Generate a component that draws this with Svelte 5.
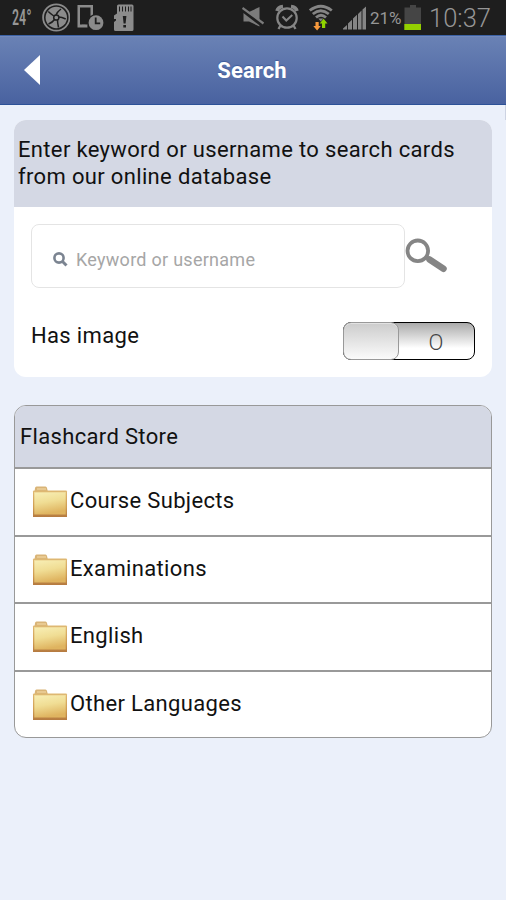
<script lang="ts">
	const folders = ['Course Subjects', 'Examinations', 'English', 'Other Languages'];

	let keyword = $state('');
	let hasImage = $state(false);
</script>

<div class="screen">
	<div class="status-bar">
		<span class="temp">24°</span>
		<svg class="wheel" width="28" height="35" viewBox="42 0 28 35">
			<circle cx="56.3" cy="17.5" r="13.2" fill="none" stroke="#8b8b8b" stroke-width="1.8" />
			<circle cx="56.3" cy="17.5" r="10.7" fill="#8b8b8b" />
			<g stroke="#1e1e1e" stroke-width="1.5" fill="none">
				<circle cx="56.3" cy="17.5" r="2.6" />
				<path d="M56 15q1-3 5-6M58.7 17q3 0 7 2M57.5 20q0 3 1 7.500M54.500 19.500q-2 3-6 4.500M53.800 16q-3-2-5.500-4.500" />
			</g>
		</svg>
		<svg class="device" width="27" height="35" viewBox="76.500 0 27 35">
			<path d="M92.500 14.500V5H77v22.500h10a8 8 0 0 1 0-3H79.500V7.500H90V16z" fill="#8b8b8b" />
			<path d="M81.500 25.500h3.500" stroke="#8b8b8b" stroke-width="1.500" />
			<circle cx="95.500" cy="22.700" r="7.400" fill="#8b8b8b" />
			<path d="M95.200 17.500v5.800h4.500" fill="none" stroke="#1e1e1e" stroke-width="1.800" />
		</svg>
		<svg class="sd" width="20" height="35" viewBox="114 0 20 35">
			<path d="M118.500 4.500h13.500q1.500 0 1.500 1.500v23.500q0 1.500-1.500 1.500h-16.500q-1.500 0-1.500-1.500V22l2-1.500v-1.500H114v-3.500l3-2V6q0-1.500 1.500-1.500z" fill="#8b8b8b" />
			<path d="M119.500 6.500v5M122.500 6.500v5M125.500 6.500v5M128.500 6.500v5M131 6.500v5" stroke="#1e1e1e" stroke-width="1" />
			<path d="M122.800 16h3.600l-.8 7.500h-2zM123.300 25h2.700v2.500h-2.700z" fill="#1e1e1e" />
		</svg>
		<svg class="mute" width="23" height="35" viewBox="242 0 23 35">
			<path d="M243.500 12h5.500l10.500-5v19.500l-10.500-5h-5.500z" fill="#7b7b7b" />
			<path d="M242 9.500l21 16" stroke="#1e1e1e" stroke-width="4" />
			<path d="M242.500 8l21 15.500" stroke="#7b7b7b" stroke-width="2.200" />
		</svg>
		<svg class="alarm" width="24" height="35" viewBox="275 0 24 35">
			<g fill="none" stroke="#858585">
				<circle cx="287" cy="18" r="9.700" stroke-width="2.200" />
				<path d="M282.500 16.500l3.800 4 6-5.500" stroke-width="2" />
				<path d="M277 11q1-4 6-4.500M297 11q-1-4-6-4.500" stroke-width="3.600" />
				<path d="M280.500 25.500l-2 3.500M293.500 25.500l2 3.500" stroke-width="2.300" />
			</g>
		</svg>
		<svg class="wifi" width="24" height="35" viewBox="309 0 24 35">
			<g fill="none" stroke="#858585" stroke-width="2.800">
				<path d="M309.800 10.500q11-8.500 22 0" />
				<path d="M312.800 14q8-6.500 16 0" />
				<path d="M316 17.500q5-4.500 10 0" />
			</g>
			<path d="M318.300 18.500h5l-2.500 3z" fill="#858585" />
			<path d="M315.500 22h3.200v4h2.100l-3.700 4.500-3.800-4.500h2.200z" fill="#f7993c" />
			<path d="M322 28h3.200v-4.500h2.300l-3.900-4.700-3.900 4.700h2.300z" fill="#8fd400" />
		</svg>
		<svg class="signal" width="24" height="35" viewBox="343 0 24 35">
			<path d="M343 29.500v-1l4-3.500v4.500zM348 29.500v-6l4-3.700v9.700zM353 29.500v-11l4-3.700v14.700zM358 29.500v-15.500l3.500-3.500v19zM362.500 29.500V9.500l3.500-3v23z" fill="#858585" />
		</svg>
		<span class="percent">21%</span>
		<svg class="battery" width="17" height="35" viewBox="404 0 17 35">
			<path d="M410 5h6v2.500h5V24h-16.500V7.500h5.500z" fill="#454545" />
			<path d="M404.300 24h16.700v6h-16.700z" fill="#94cf00" />
		</svg>
		<span class="clock">10:37</span>
	</div>

	<header>
		<button class="back" aria-label="Back">
			<svg width="16" height="32" viewBox="0 0 16 32"><path d="M16 1v30L0 16z" fill="#fff" /></svg>
		</button>
		<h1>Search</h1>
		<span class="scrollbar"></span>
	</header>

	<main>
		<section class="search-card">
			<p class="intro">Enter keyword or username to search cards from our online database</p>
			<div class="search-row">
				<label class="field">
					<svg width="15" height="15" viewBox="0 0 15 15">
						<circle cx="6" cy="6" r="4.600" fill="none" stroke="#7b8491" stroke-width="2.600" />
						<path d="M9.500 9.500l4 4" stroke="#7b8491" stroke-width="3" />
					</svg>
					<input type="text" placeholder="Keyword or username" bind:value={keyword} />
				</label>
				<button class="go" aria-label="Search">
					<svg width="42" height="36" viewBox="0 0 42 36">
						<circle cx="12.800" cy="12.800" r="10.300" fill="none" stroke="#858585" stroke-width="3.800" />
						<path d="M20.500 18.500l4 3" stroke="#858585" stroke-width="4" />
						<path d="M24.500 21.500l14 9.300" stroke="#858585" stroke-width="6.500" stroke-linecap="round" />
					</svg>
				</button>
			</div>
			<div class="option-row">
				<span class="label">Has image</span>
				<button class="toggle" class:on={hasImage} aria-label="Has image" onclick={() => (hasImage = !hasImage)}>
					<span class="knob"></span>
					<span class="state">{hasImage ? 'I' : 'O'}</span>
				</button>
			</div>
		</section>

		<section class="store">
			<h2>Flashcard Store</h2>
			<ul>
				{#each folders as folder}
					<li>
						<svg width="36" height="32" viewBox="0 0 36 32">
							<defs>
								<linearGradient id="folder" x1="0" y1="0" x2=".25" y2="1">
									<stop offset="0" stop-color="#f8efb6" />
									<stop offset=".5" stop-color="#f0dd94" />
									<stop offset="1" stop-color="#dfb460" />
								</linearGradient>
								<linearGradient id="edge" x1="0" y1="0" x2="0" y2="1">
									<stop offset="0" stop-color="#dfb974" />
									<stop offset=".65" stop-color="#cf9c50" />
									<stop offset="1" stop-color="#b57a40" />
								</linearGradient>
							</defs>
							<path d="M2.500 6l.5-4q.2-1.500 1.500-1.500h9q1.300 0 1.500 1.500l1 4z" fill="#d9b477" />
							<path d="M5 3h9" stroke="#ecd09a" stroke-width="1.500" />
							<path d="M1 5.500q0-1 1-1h32q1 0 1 1V31H1z" fill="url(#edge)" />
							<path d="M2.300 6.200h31.400V28.500H2.300z" fill="url(#folder)" />
							<path d="M2.500 6.500h31" stroke="#f0dc9c" />
						</svg>
						<span>{folder}</span>
					</li>
				{/each}
			</ul>
		</section>
	</main>
</div>

<style>
	:global(body) {
		background: #ebf0fa;
	}

	.screen {
		min-height: 900px;
		font-family: Roboto, sans-serif;
		font-size: 22px;
		letter-spacing: 0.34px;
		color: #111;
		background: #ebf0fa;
	}

	button {
		display: flex;
		padding: 0;
		border: 0;
		background: none;
		font: inherit;
	}

	.status-bar {
		display: flex;
		align-items: center;
		height: 35px;
		padding-left: 12px;
		background: #1e1e1e;
		color: #969696;
		letter-spacing: 0;
		white-space: nowrap;
	}

	.status-bar svg {
		flex-shrink: 0;
	}

	.temp {
		width: 30px;
		font-family: 'Roboto Condensed', Roboto, sans-serif;
		font-size: 21.5px;
		font-weight: 500;
		transform: scaleX(0.66);
		transform-origin: left;
	}

	.device {
		margin-left: 6.5px;
	}

	.sd {
		margin-left: 10.5px;
	}

	.mute {
		margin-left: 108px;
	}

	.alarm {
		margin-left: 10px;
	}

	.wifi,
	.signal {
		margin-left: 10px;
	}

	.percent {
		width: 34px;
		margin-left: 3px;
		font-size: 17px;
	}

	.clock {
		margin-left: 8px;
		font-size: 25.5px;
		font-weight: 300;
	}

	header {
		position: relative;
		display: grid;
		grid-template-columns: 80px 1fr 80px;
		align-items: center;
		box-sizing: border-box;
		height: 70px;
		border-top: 1px solid #3c62a5;
		border-bottom: 1px solid #2c5197;
		background: linear-gradient(#6a82b5, #4962a0);
		box-shadow: inset 0 1px #7389bb;
	}

	.back {
		margin-left: 24px;
	}

	h1 {
		margin: 0 2px 0 0;
		font-size: 22px;
		font-weight: 700;
		letter-spacing: 0.1px;
		text-align: center;
		color: #fff;
		text-shadow: 0 -1px 1px #3e5c9c;
	}

	.scrollbar {
		position: absolute;
		top: 69px;
		right: 0;
		width: 1px;
		height: 15px;
		background: #cdd3e2;
	}

	main {
		display: flex;
		flex-direction: column;
		gap: 28px;
		padding: 15px 14px;
	}

	.search-card {
		height: 257px;
		border-radius: 12px;
		overflow: hidden;
		background: #fff;
	}

	.intro {
		box-sizing: border-box;
		height: 87px;
		margin: 0;
		padding: 17px 4px 0;
		line-height: 26.5px;
		background: #d4d8e4;
	}

	.search-row {
		display: flex;
		align-items: center;
		padding: 17px 17px 0;
	}

	.field {
		display: flex;
		align-items: center;
		gap: 8px;
		box-sizing: border-box;
		width: 374px;
		height: 64px;
		padding: 6px 21px 0;
		border: 1px solid #e4e4e4;
		border-radius: 8px;
	}

	input {
		flex: 1;
		padding: 0;
		border: 0;
		outline: 0;
		font: 18px Roboto, sans-serif;
		letter-spacing: 0.27px;
		background: none;
	}

	input::placeholder {
		color: #a6a6a6;
	}

	.option-row {
		display: flex;
		justify-content: space-between;
		padding: 34px 17px 0;
	}

	.label {
		margin-top: 1px;
	}

	.toggle {
		box-sizing: border-box;
		width: 132px;
		height: 38px;
		border: 1px solid #000;
		border-radius: 8px;
		background: linear-gradient(#aaa, #fff 70%);
		color: #444;
	}

	.toggle.on {
		flex-direction: row-reverse;
	}

	.knob {
		box-sizing: border-box;
		width: 56px;
		height: 38px;
		margin: -1px;
		border: 1px solid #999;
		border-radius: 8px;
		background: linear-gradient(#ccc, #fbfbfb);
		box-shadow: inset 0 1px #e2e2e2;
	}

	.state {
		flex: 1;
		font-weight: 300;
		line-height: 39px;
		text-align: center;
	}

	.store {
		box-sizing: border-box;
		height: 333px;
		border: 1px solid #999;
		border-radius: 12px;
		overflow: hidden;
		background: #fff;
	}

	h2 {
		box-sizing: border-box;
		height: 61px;
		margin: 0;
		padding-left: 5px;
		font-size: 22px;
		font-weight: 400;
		line-height: 61px;
		background: #d4d8e4;
	}

	ul {
		margin: 0;
		padding: 0;
		list-style: none;
	}

	li {
		display: flex;
		gap: 2px;
		box-sizing: border-box;
		height: 67.5px;
		padding: 17px 17px 0;
		border-top: 2px solid #999;
	}

	li span {
		line-height: 29px;
	}
</style>
